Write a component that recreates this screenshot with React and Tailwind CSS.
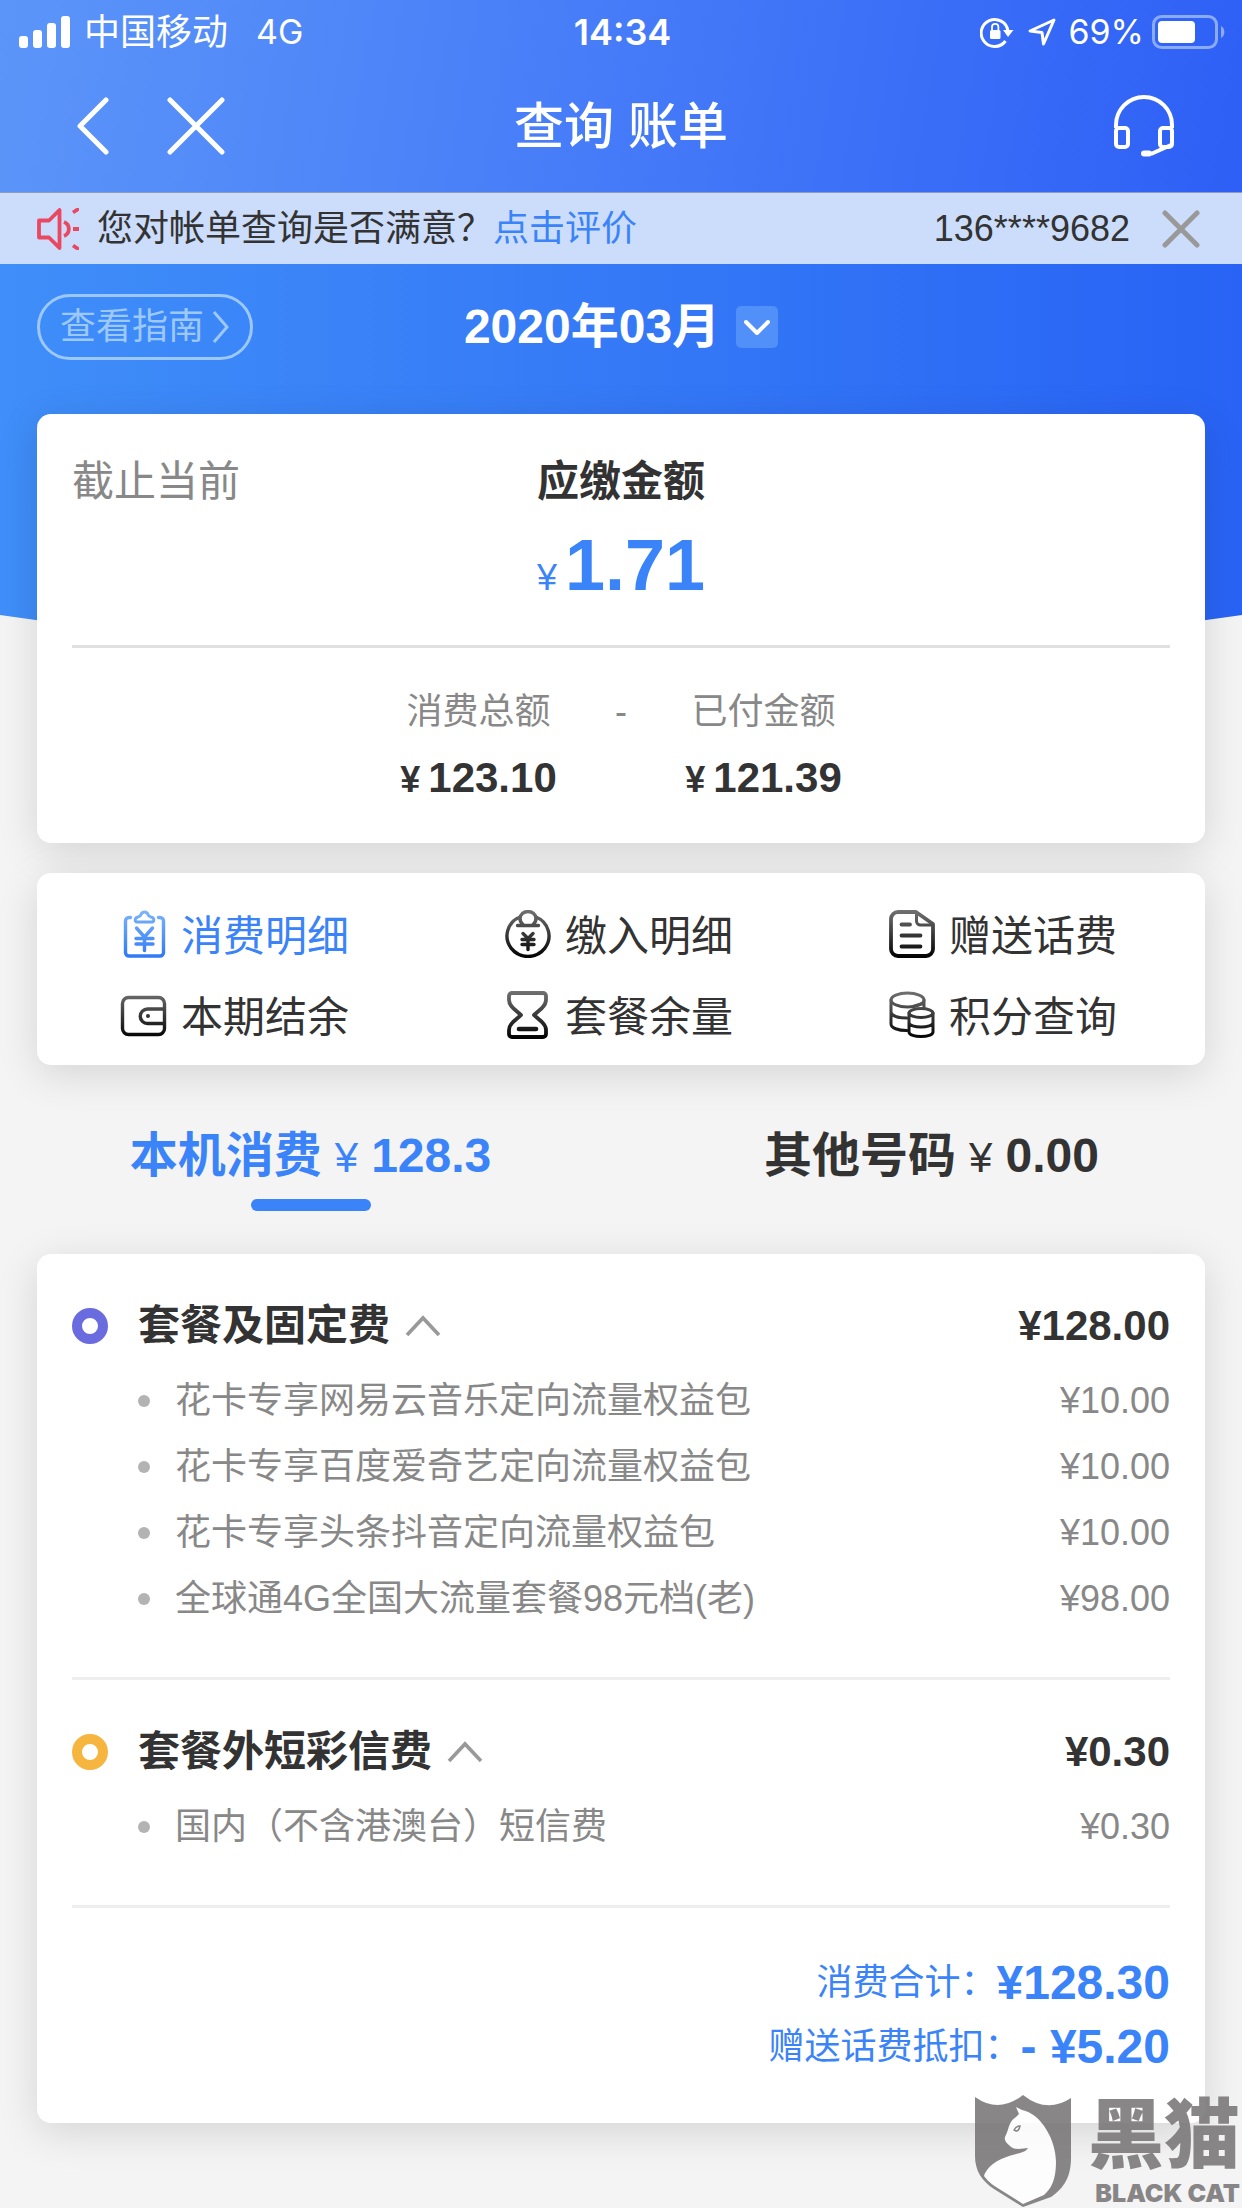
import React, { useState } from "react";

const YEN = "\u00a5";

const CARD = "relative mx-[37px] rounded-[14px] bg-white shadow-[0_9px_42px_rgba(0,0,0,0.13)]";

const SECTIONS = [
  {
    title: "套餐及固定费",
    total: "128.00",
    ring: "border-[#6b6be0]",
    items: [
      { name: "花卡专享网易云音乐定向流量权益包", price: "10.00" },
      { name: "花卡专享百度爱奇艺定向流量权益包", price: "10.00" },
      { name: "花卡专享头条抖音定向流量权益包", price: "10.00" },
      { name: "全球通4G全国大流量套餐98元档(老)", price: "98.00" },
    ],
  },
  {
    title: "套餐外短彩信费",
    total: "0.30",
    ring: "border-[#f5b53f]",
    items: [{ name: "国内（不含港澳台）短信费", price: "0.30" }],
  },
];

const Icon = ({ children, ...props }) => (
  <svg
    viewBox="0 0 48 48"
    className="mb-[6px] h-12 w-12 shrink-0"
    fill="none"
    strokeLinecap="round"
    strokeLinejoin="round"
    aria-hidden="true"
    {...props}
  >
    {children}
  </svg>
);

// Shared vertical gradients for the menu icons
const Gradients = () => (
  <svg width="0" height="0" className="absolute" aria-hidden="true">
    <defs>
      <linearGradient id="inkBlue" gradientUnits="userSpaceOnUse" x1="0" y1="0" x2="0" y2="48">
        <stop offset="0" stopColor="#7db6fb" />
        <stop offset="1" stopColor="#2f78f6" />
      </linearGradient>
      <linearGradient id="inkDark" gradientUnits="userSpaceOnUse" x1="0" y1="0" x2="0" y2="48">
        <stop offset="0" stopColor="#727272" />
        <stop offset="1" stopColor="#000000" />
      </linearGradient>
    </defs>
  </svg>
);

const BillIcon = () => (
  <Icon stroke="url(#inkBlue)" strokeWidth="3.400">
    <path d="M11.500 7.500H10a3.500 3.500 0 0 0-3.500 3.500v31.500A3.500 3.500 0 0 0 10 46h31a3.500 3.500 0 0 0 3.500-3.500V11A3.500 3.500 0 0 0 41 7.500h-1.500" />
    <path d="M18 12c-2.500 0-2.500-4.500 1-5 1.500-.3 2.500-1 3-2.500 1-3.500 6-3.500 7 0 .5 1.500 1.500 2.200 3 2.500 3.500.5 3.500 5 1 5z" strokeWidth="3" />
    <path d="M17.500 18l8 9 8-9M17 28.500h17M17 34h17M25.500 28v12.500" />
  </Icon>
);

const PayIcon = () => (
  <Icon stroke="url(#inkDark)" strokeWidth="3.400">
    <path d="M17 7a21 20.500 0 1 0 16 0" />
    <path d="M20 14.500c-2.500-2-3-4-3-6a8 7 0 0 1 16 0c0 2-.5 4-3 6M14.500 15.500h21" />
    <path d="M20 23.500l5 5 5-5M19 29.500h12M19 34.500h12M25 29v10.500" />
  </Icon>
);

const GiftIcon = () => (
  <Icon stroke="url(#inkDark)" strokeWidth="3.800">
    <path d="M29 2H11a7 7 0 0 0-7 7v30a7 7 0 0 0 7 7h28a7 7 0 0 0 7-7V14z" />
    <path d="M29.500 3v8a4 4 0 0 0 4 4H45" strokeWidth="3" />
    <path d="M14.500 14.500h8.500M14.500 25.500h19M14.500 36.500h19" />
  </Icon>
);

const WalletIcon = () => (
  <Icon stroke="url(#inkDark)" strokeWidth="3.400">
    <rect x="3.500" y="6.500" width="42" height="37" rx="6" />
    <path d="M45 18H28.500a6.500 6.500 0 0 0 0 14.500H45" />
    <circle cx="29" cy="25" r="2" fill="#333333" stroke="none" />
  </Icon>
);

const HourglassIcon = () => (
  <Icon stroke="url(#inkDark)" strokeWidth="3.800">
    <path d="M9 2h31a3 3 0 0 1 3 3v4c0 3-1 5-4 8l-8 7 8 7c3 3 4 5 4 8v4a3 3 0 0 1-3 3H9a3 3 0 0 1-3-3v-4c0-3 1-5 4-8l8-7-8-7c-3-3-4-5-4-8V5a3 3 0 0 1 3-3z" />
    <path d="M16 38h17" strokeWidth="4.600" />
  </Icon>
);

const CoinsIcon = () => (
  <Icon stroke="url(#inkDark)" strokeWidth="3">
    <ellipse cx="20.500" cy="9" rx="16.500" ry="7" />
    <path d="M4 9v24c0 4 7 6.500 16 6.500M37 9v7M4 21.500c1 3.500 8 5.500 16 5.500M26 15.500l11-3.500" />
    <ellipse cx="34" cy="22" rx="12" ry="4.500" />
    <path d="M22 22v19c0 6 24 6 24 0V22M22 31.500c0 6 24 6 24 0" />
  </Icon>
);

const MENU = [
  { label: "消费明细", icon: BillIcon, active: true },
  { label: "缴入明细", icon: PayIcon },
  { label: "赠送话费", icon: GiftIcon },
  { label: "本期结余", icon: WalletIcon },
  { label: "套餐余量", icon: HourglassIcon },
  { label: "积分查询", icon: CoinsIcon },
];

const StatusBar = () => (
  <div className="grid h-[60px] grid-cols-[1fr_auto_1fr] items-center pl-[19px] pr-4 pt-[2px] font-[Inter,'Noto_Sans_CJK_SC',sans-serif] text-[34px] leading-[60px]">
    <div className="flex items-center">
      <div className="mr-[14px] flex h-8 items-end gap-[5px]">
        <span className="h-3 w-[9px] rounded-[3px] bg-white" />
        <span className="h-[18px] w-[9px] rounded-[3px] bg-white" />
        <span className="h-[25px] w-[9px] rounded-[3px] bg-white" />
        <span className="h-8 w-[9px] rounded-[3px] bg-white" />
      </div>
      <span className="text-[36px]">中国移动</span>
      <span className="ml-7">4G</span>
    </div>
    <span className="text-[36px] font-semibold">14:34</span>
    <div className="flex items-center justify-end">
      <svg viewBox="0 0 34 32" className="mr-[14px] h-8 w-[34px]" fill="none" aria-hidden="true">
        <path d="M25.500 25A13.500 13.500 0 1 1 28 15" stroke="#fff" strokeWidth="3" />
        <path d="M23 14h10.500L28 21z" fill="#fff" />
        <rect x="10" y="14" width="10.500" height="9" rx="1.500" fill="#fff" />
        <path d="M12 14v-3a3.200 3.200 0 0 1 6.400 0v3" stroke="#fff" strokeWidth="1.800" />
      </svg>
      <svg viewBox="0 0 28 28" className="mr-3 h-7 w-7" fill="none" stroke="#fff" strokeWidth="3" strokeLinejoin="round" aria-hidden="true">
        <path d="M26 2L2 13l12 1.500L15.500 26z" />
      </svg>
      <span>69%</span>
      <svg viewBox="0 0 74 34" className="ml-2 h-[34px] w-[74px]" fill="none" aria-hidden="true">
        <rect x="1.500" y="1.500" width="63" height="31" rx="8" stroke="#8aabfa" strokeWidth="3" />
        <rect x="6" y="6" width="37" height="22" rx="4" fill="#fff" />
        <path d="M69 11c4.500 2 4.500 10 0 12z" fill="#8aabfa" />
      </svg>
    </div>
  </div>
);

const NavBar = () => (
  <div className="grid h-[132px] grid-cols-[1fr_auto_1fr] items-center px-[68px]">
    <div className="flex items-center gap-[57px] pl-2">
      <button type="button" aria-label="返回">
        <svg viewBox="0 0 34 58" className="h-[58px] w-[34px]" fill="none" stroke="#fff" strokeWidth="5" strokeLinecap="round" strokeLinejoin="round">
          <path d="M30 3L4 29l26 26" />
        </svg>
      </button>
      <button type="button" aria-label="关闭">
        <svg viewBox="0 0 58 58" className="h-[58px] w-[58px]" fill="none" stroke="#fff" strokeWidth="5" strokeLinecap="round">
          <path d="M3 3l52 52M55 3L3 55" />
        </svg>
      </button>
    </div>
    <h1 className="pt-[2px] text-[50px] font-medium leading-[60px]">查询 账单</h1>
    <button type="button" aria-label="客服" className="justify-self-end">
      <svg viewBox="0 0 60 62" className="h-[62px] w-[60px]" fill="none" stroke="#fff" strokeWidth="4" strokeLinejoin="round">
        <path d="M2 33V30a28 28 0 0 1 56 0v3" />
        <rect x="2" y="33" width="12" height="19" rx="3" />
        <rect x="46" y="33" width="12" height="19" rx="3" />
        <path d="M57 50L37 59" />
        <path d="M30 58.500h5" strokeWidth="6" strokeLinecap="round" />
      </svg>
    </button>
  </div>
);

const Notice = () => (
  <div className="flex h-[72px] items-center border-t border-[#8f9bb8] bg-[#ccddfc] pl-[37px] pr-[42px] text-[36px] leading-[70px] text-[#333]">
    <svg viewBox="0 0 42 42" className="mr-[18px] h-[42px] w-[42px]" fill="none" stroke="#ea4861" strokeWidth="3.800" aria-hidden="true">
      <path d="M2 12.500h10L22.500 2v38L12 29.500H2z" strokeLinejoin="round" />
      <path d="M27 14a7.500 7.500 0 0 1 0 14M36 21H42M36 4.500L42 .5M36 37.500l6 4" />
    </svg>
    <span>您对帐单查询是否满意？</span>
    <a href="#rate" className="text-[#3a83f9]">点击评价</a>
    <span className="ml-auto">136****9682</span>
    <button type="button" aria-label="关闭提示" className="ml-8">
      <svg viewBox="0 0 38 38" className="h-[38px] w-[38px]" stroke="#999" strokeWidth="5" strokeLinecap="round">
        <path d="M3 3l32 32M35 3L3 35" />
      </svg>
    </button>
  </div>
);

const Hero = () => (
  <div className="h-[394px] bg-linear-to-r from-[#3f8ef9] via-[#3579f6] to-[#2863f5] pt-[30px] [clip-path:ellipse(110%_100%_at_50%_0)]">
    <div className="grid grid-cols-[1fr_auto_1fr] items-center px-[37px]">
      <button
        type="button"
        className="flex h-[66px] items-center gap-2 justify-self-start rounded-full border-[3px] border-[#9cc8fb] px-5 text-[36px] leading-[60px] text-[#9cc8fb]"
      >
        查看指南
        <svg viewBox="0 0 18 34" className="h-[34px] w-[18px]" fill="none" stroke="currentColor" strokeWidth="3">
          <path d="M2 2l13 15L2 32" />
        </svg>
      </button>
      <button type="button" className="flex items-center gap-4 text-[48px] font-bold leading-[60px] text-white">
        2020年03月
        <span className="flex h-[42px] w-[42px] items-center justify-center rounded-[5px] bg-[#5190f8]">
          <svg viewBox="0 0 26 16" className="h-4 w-[26px]" fill="none" stroke="#fff" strokeWidth="4" strokeLinecap="round" strokeLinejoin="round">
            <path d="M2 3l11 11L24 3" />
          </svg>
        </span>
      </button>
    </div>
  </div>
);

const Amount = ({ label, value }) => (
  <div className="flex w-[160px] flex-col items-center">
    <span className="text-[36px] leading-[66px] text-[#888]">{label}</span>
    <span className="whitespace-nowrap text-[42px] font-bold leading-[66px] text-[#333]">
      <span className="mr-2 text-[36px]">{YEN}</span>
      {value}
    </span>
  </div>
);

const Summary = () => (
  <section className={`${CARD} -mt-[244px] px-[35px] pb-[30px] pt-[38px]`}>
    <div className="grid grid-cols-[1fr_auto_1fr] text-[42px] leading-[60px]">
      <span className="text-[#888]">截止当前</span>
      <h2 className="font-bold text-[#333]">应缴金额</h2>
    </div>
    <div className="flex items-baseline justify-center gap-2 pb-[27px] text-[#3a83f9]">
      <span className="text-[36px]">{YEN}</span>
      <strong className="text-[72px] leading-[106px]">1.71</strong>
    </div>
    <div className="flex justify-center border-t-[3px] border-[#e0e0e0] pt-[31px]">
      <Amount label="消费总额" value="123.10" />
      <span className="w-[125px] text-center text-[36px] leading-[66px] text-[#888]">-</span>
      <Amount label="已付金额" value="121.39" />
    </div>
  </section>
);

const Menu = () => (
  <nav className={`${CARD} mt-[30px] grid grid-cols-3 px-2 pb-[7px] pt-[23px]`}>
    {MENU.map(({ label, icon: MenuIcon, active }) => (
      <button
        key={label}
        type="button"
        className={`flex h-[81px] items-center justify-center gap-[14px] pr-[6px] text-[42px] ${active ? "text-[#3a83f9]" : "text-[#333]"}`}
      >
        <MenuIcon />
        {label}
      </button>
    ))}
  </nav>
);

const Tabs = () => {
  const [tab, setTab] = useState(0);
  const tabs = [
    { label: "本机消费", value: "128.3" },
    { label: "其他号码", value: "0.00" },
  ];

  return (
    <div className="grid h-[189px] grid-cols-2 pt-14" role="tablist">
      {tabs.map(({ label, value }, i) => (
        <button
          key={label}
          type="button"
          role="tab"
          aria-selected={tab === i}
          onClick={() => setTab(i)}
          className={`flex flex-col items-center text-[48px] font-bold leading-[70px] ${tab === i ? "text-[#3a83f9]" : "text-[#333]"}`}
        >
          <span>
            {label}
            <span className="mx-[13px] text-[42px] font-normal">{YEN}</span>
            {value}
          </span>
          {tab === i && <span className="mt-[6px] h-3 w-[120px] rounded-full bg-[#3a83f9]" />}
        </button>
      ))}
    </div>
  );
};

const Section = ({ title, total, ring, items }) => {
  const [open, setOpen] = useState(true);

  return (
    <section className="border-b-[3px] border-[#eee] pb-[45px] pt-[42px]">
      <div className="flex h-[60px] items-center text-[42px] font-bold leading-[60px] text-[#333]">
        <span className={`h-9 w-9 rounded-full border-[10px] ${ring}`} />
        <button type="button" aria-expanded={open} onClick={() => setOpen(!open)} className="ml-[30px] flex items-center gap-[15px]">
          <span>{title}</span>
          <svg viewBox="0 0 36 22" className={`h-[22px] w-9 ${open ? "" : "rotate-180"}`} fill="none" stroke="#999" strokeWidth="3.600">
            <path d="M2 20L18 3l16 17" />
          </svg>
        </button>
        <span className="ml-auto">{YEN}{total}</span>
      </div>
      {open && (
        <ul className="pt-3 text-[36px] leading-[66px] text-[#888]">
          {items.map(({ name, price }) => (
            <li key={name} className="flex items-center pl-[66px]">
              <span className="mr-[25px] h-3 w-3 rounded-full bg-[#b3b3b3]" />
              <span>{name}</span>
              <span className="ml-auto">{YEN}{price}</span>
            </li>
          ))}
        </ul>
      )}
    </section>
  );
};

const Totals = () => (
  <dl className="grid gap-y-1 pb-[46px] pt-[45px] text-right text-[#3a83f9]">
    <div className="flex items-center justify-end">
      <dt className="text-[36px] leading-[60px]">消费合计：</dt>
      <dd className="text-[48px] font-bold leading-[60px]">{YEN}128.30</dd>
    </div>
    <div className="flex items-center justify-end">
      <dt className="text-[36px] leading-[60px]">赠送话费抵扣：</dt>
      <dd className="text-[48px] font-bold leading-[60px]">- {YEN}5.20</dd>
    </div>
  </dl>
);

const Watermark = () => (
  <div className="pointer-events-none absolute bottom-0 right-[2px] flex items-end gap-4 text-[#757273] opacity-85">
    <svg viewBox="0 0 98 114" className="h-[114px] w-[98px]" aria-hidden="true">
      <path d="M1 3Q25 20 49 1q24 19 48 3v60c0 22-10 32-20 39L49 113 20 95C8 87 1 77 1 62z" fill="currentColor" />
      <path
        d="M42 13l6 3c20 4 34 31 34 52 0 18-5 27-12 33L49 110 22 93c-6-4-9-7-12-11 4-13 21-20 36-23 4-1 7-3 8-5-7 1-15 2-18-2-4-3-6-6-5-9 4-7 3-15 11-20l3-3z"
        fill="#fff"
      />
      <path d="M40 36q2-4 6-4-1 5-4 5z" fill="none" stroke="currentColor" strokeWidth="1.400" />
    </svg>
    <div className="flex flex-col items-end font-black">
      <span className="text-[76px] leading-[84px]">黑猫</span>
      <span className="font-[Inter,sans-serif] text-[25px] leading-[30px]">BLACK CAT</span>
    </div>
  </div>
);

const App = () => (
  <div className="relative min-h-screen bg-[#f4f4f4] pb-[84px] font-['Liberation_Sans','Noto_Sans_CJK_SC',sans-serif]">
    <Gradients />
    <header className="bg-linear-[100deg,#5c95f9,#457bf8_50%,#2e5ff6] text-white">
      <StatusBar />
      <NavBar />
    </header>
    <Notice />
    <main>
      <Hero />
      <Summary />
      <Menu />
      <Tabs />
      <div className={`${CARD} px-[35px]`}>
        {SECTIONS.map((section) => (
          <Section key={section.title} {...section} />
        ))}
        <Totals />
      </div>
    </main>
    <Watermark />
  </div>
);

export default App;
